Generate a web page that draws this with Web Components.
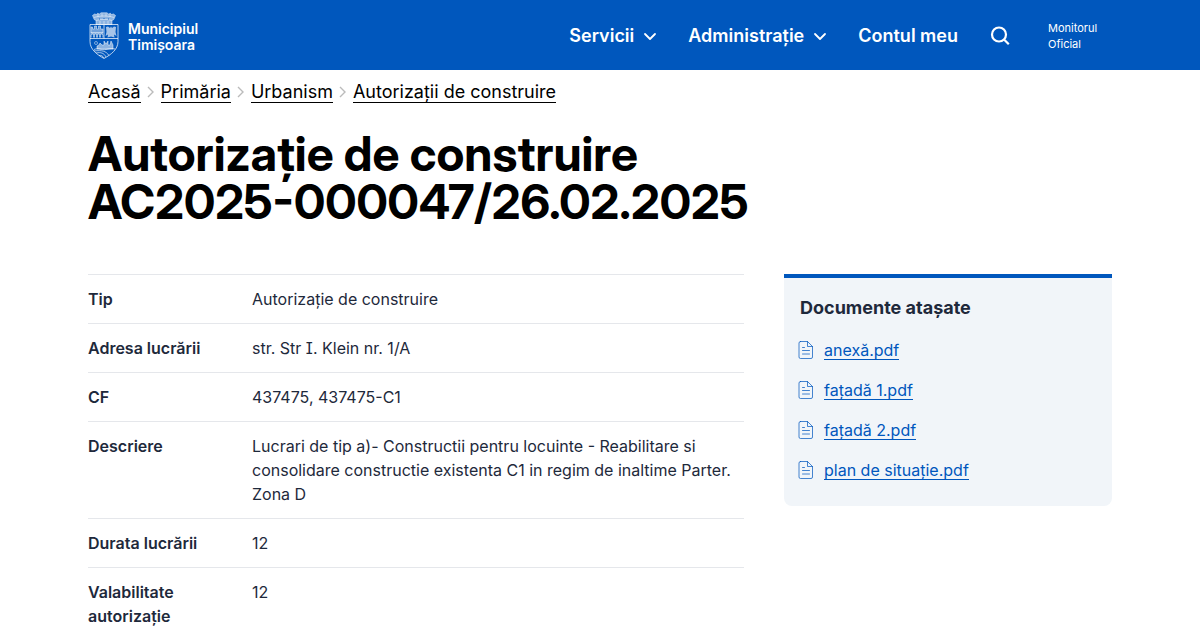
<!DOCTYPE html>
<html lang="ro">
<head>
  <meta charset="utf-8">
  <meta name="viewport" content="width=device-width, initial-scale=1">
  <title>Autorizație de construire AC2025-000047/26.02.2025</title>
  <style>
    :root {
      --blue: #0057bd;
      --ink: #1e293b;
      --line: #e5e7eb;
      --panel: #f1f5f9;
    }

    body {
      margin: 0;
      background: #fff;
      color: var(--ink);
      font: 16px/24px Inter, "Liberation Sans", sans-serif;
    }

    main {
      max-width: 1024px;
      margin: 0 auto;
      padding: 8px 24px 0;
    }

    h1 {
      margin: 24px 0 48px;
      color: #000;
      font-family: "Inter Display", Inter, "Liberation Sans", sans-serif;
      font-variation-settings: "opsz" 32;
      font-size: 48px;
      line-height: 48px;
      font-weight: 700;
    }

    .columns {
      display: grid;
      grid-template-columns: 2fr 1fr;
      align-items: start;
      gap: 40px;
    }

    @media (max-width: 800px) {
      .columns {
        grid-template-columns: 1fr;
      }
    }
  </style>
</head>
<body>
  <site-header>
    <nav-item menu>Servicii</nav-item>
    <nav-item menu>Administrație</nav-item>
    <nav-item>Contul meu</nav-item>
  </site-header>

  <main>
    <bread-crumbs></bread-crumbs>
    <h1>Autorizație de construire<br>AC2025-000047/26.02.2025</h1>
    <div class="columns">
      <permit-details></permit-details>
      <docs-panel heading="Documente atașate">
        <doc-link>anexă.pdf</doc-link>
        <doc-link>fațadă 1.pdf</doc-link>
        <doc-link>fațadă 2.pdf</doc-link>
        <doc-link>plan de situație.pdf</doc-link>
      </docs-panel>
    </div>
  </main>

  <script>
    // attaches an open shadow root filled from a template
    function render(host, html) {
      const template = document.createElement("template");
      template.innerHTML = html;
      host.attachShadow({ mode: "open" }).appendChild(template.content.cloneNode(true));
    }

    class CityCrest extends HTMLElement {
      constructor() {
        super();
        render(this, `
          <style>
            :host { display: block; }
            svg { display: block; }
          </style>
          <svg width="32" height="48" viewBox="0 0 32 48" fill="none" stroke="#fff" stroke-opacity=".8" stroke-width=".6" aria-hidden="true">
            <!-- mural crown -->
            <path d="M4.500 3.500l2-1.500 2 .5 1-1.200 2 .7 1.500-1.200h6l1.500 1.200 2-.7 1 1.200 2-.5 2 1.500-1.700 4-1.800 1v4h-16v-4l-1.800-1z" fill="#fff" fill-opacity=".55"/>
            <path d="M6 5.500c6-2 14-2 20 0M8 8.500c5-1.500 11-1.500 16 0M10 2v3M14 1.500v3M18 1.500v3M22 2v3M12 9v3M16 9v3M20 9v3"/>
            <path d="M11 7h1M15.500 6.500h1M20 7h1" stroke="#0057bd" stroke-width="1"/>
            <!-- shield -->
            <path d="M2 12.500h28v17c0 8-7 13-14 17-7-4-14-9-14-17z" stroke-width=".9"/>
            <path d="M2 26.500h28M16 13v13.500" stroke-width=".9"/>
            <!-- fort and bridge -->
            <path d="M3 17v-2h1.500v2h2v-3h2v3h2v-3h2v3H15v4H3z" fill="#fff" fill-opacity=".45"/>
            <path d="M3 21h12M3 25.500v-2a1.200 1.200 0 0 1 3 0v2M6 25.500v-2a1.200 1.200 0 0 1 3 0v2M9 25.500v-2a1.200 1.200 0 0 1 3 0v2M12 25.500v-2a1.200 1.200 0 0 1 3 0v2" stroke-width=".9"/>
            <!-- eagle -->
            <path d="M23 14.500l1 1.500 2-1.500 2 .5-.5 5 1 4-2.500-1.500.5 3-3.500-1-3.500 1 .5-3-2.500 1.500 1-4-.5-5 2-.5 2 1.500z" fill="#fff" fill-opacity=".65" stroke="none"/>
            <!-- sun, city and river -->
            <circle cx="8" cy="31" r="1.500"/>
            <path d="M9 37v-3l2-1 1-2 2 2h2v-4l2 3 2-3v4h2l1-4 2 4v4z" fill="#fff" fill-opacity=".55"/>
            <path d="M6 37.500c5-2 7 1 12 0s6-1 9-.5M6 39c8-1 12 0 15 4.500M8 41c5-1 8 0 10 4M11 43.500c2-.5 4 .5 5 2.500" stroke-width=".8"/>
          </svg>
        `);
      }
    }

    class NavItem extends HTMLElement {
      constructor() {
        super();
        // entries with a submenu are buttons, the rest are plain links
        const menu = this.hasAttribute("menu");
        render(this, `
          <style>
            :host { display: block; }
            a, button {
              display: flex;
              align-items: center;
              gap: 8px;
              padding: 0;
              border: 0;
              background: none;
              color: #fff;
              font: 600 18px/28px Inter, "Liberation Sans", sans-serif;
              text-decoration: none;
              white-space: nowrap;
              cursor: pointer;
            }
          </style>
          ${menu
            ? `<button type="button" aria-haspopup="true"><slot></slot>
                <svg width="16" height="16" viewBox="0 0 16 16" fill="none" stroke="#fff" stroke-width="1.800" stroke-linecap="round" stroke-linejoin="round" aria-hidden="true"><path d="M3 6l5 5 5-5"/></svg>
              </button>`
            : `<a href="#"><slot></slot></a>`}
        `);
      }
    }

    class SiteHeader extends HTMLElement {
      constructor() {
        super();
        render(this, `
          <style>
            :host { display: block; background: var(--blue); color: #fff; }
            .bar {
              display: flex;
              align-items: center;
              justify-content: space-between;
              gap: 24px;
              max-width: 1024px;
              min-height: 68px;
              margin: 0 auto;
              padding: 2px 24px 0;
            }
            a { color: #fff; text-decoration: none; }
            .brand {
              display: flex;
              align-items: center;
              gap: 8px;
              font-size: 14px;
              line-height: 16px;
              font-weight: 600;
            }
            .brand span { padding-top: 2px; }
            nav { display: flex; align-items: center; gap: 30px; }
            button { display: flex; padding: 0; border: 0; background: none; cursor: pointer; }
            .monitor {
              width: 64px;
              margin-left: 6px;
              font-size: 11px;
              line-height: 16px;
            }
          </style>
          <header class="bar">
            <a class="brand" href="#"><city-crest></city-crest><span>Municipiul<br>Timișoara</span></a>
            <nav>
              <slot></slot>
              <button type="button" aria-label="Căutare">
                <svg width="24" height="24" viewBox="0 0 24 24" fill="none" stroke="#fff" stroke-width="2.200" aria-hidden="true"><circle cx="11" cy="10.500" r="7"/><path d="M16 15.500l4.800 4.800"/></svg>
              </button>
              <a class="monitor" href="#">Monitorul Oficial</a>
            </nav>
          </header>
        `);
      }
    }

    class BreadCrumbs extends HTMLElement {
      constructor() {
        super();
        const items = ["Acasă", "Primăria", "Urbanism", "Autorizații de construire"];
        render(this, `
          <style>
            :host { display: block; font-size: 18px; line-height: 28px; }
            ol { display: flex; flex-wrap: wrap; margin: 0; padding: 0; list-style: none; }
            li { display: flex; align-items: center; min-height: 28px; }
            a {
              color: #000;
              line-height: 20px;
              text-decoration: none;
              border-bottom: 1px solid #000;
            }
            svg { margin: 0 6px; }
          </style>
          <nav aria-label="Fir de navigare">
            <ol>${items.map((item, i) => `<li>${i
              ? `<svg width="8" height="12" viewBox="0 0 8 12" fill="none" stroke="#bbb" stroke-width="1.400" aria-hidden="true"><path d="M1 1l5 5-5 5"/></svg>`
              : ""}<a href="#">${item}</a></li>`).join("")}</ol>
          </nav>
        `);
      }
    }

    class PermitDetails extends HTMLElement {
      constructor() {
        super();
        const rows = [
          ["Tip", "Autorizație de construire"],
          ["Adresa lucrării", "str. Str I. Klein nr. 1/A"],
          ["CF", "437475, 437475-C1"],
          ["Descriere", "Lucrari de tip a)- Constructii pentru locuinte - Reabilitare si consolidare constructie existenta C1 in regim de inaltime Parter. Zona D"],
          ["Durata lucrării", "12"],
          ["Valabilitate autorizație", "12"],
        ];
        render(this, `
          <style>
            :host { display: block; }
            table { width: 100%; border-collapse: collapse; table-layout: fixed; }
            th, td {
              padding: 12px 0;
              border-top: 1px solid var(--line);
              text-align: left;
              vertical-align: top;
            }
            th { width: 25%; box-sizing: border-box; padding-right: 16px; font-weight: 600; }
            td { font-feature-settings: "cv08"; }
          </style>
          <table>
            <tbody>${rows.map(([name, value]) =>
              `<tr><th scope="row">${name}</th><td>${value}</td></tr>`).join("")}</tbody>
          </table>
        `);
      }
    }

    class DocLink extends HTMLElement {
      constructor() {
        super();
        render(this, `
          <style>
            :host { display: flex; align-items: center; gap: 10px; }
            a {
              color: var(--blue);
              line-height: 18px;
              text-decoration: none;
              border-bottom: 1px solid var(--blue);
            }
          </style>
          <svg width="16" height="20" viewBox="0 0 16 20" fill="none" stroke="#0057bd" stroke-opacity=".8" stroke-width=".9" stroke-linecap="round" stroke-linejoin="round" aria-hidden="true">
            <path d="M2.500 1.500h7l5 5v10.500a1.500 1.500 0 0 1-1.500 1.500H2.500A1.500 1.500 0 0 1 1 17V3a1.500 1.500 0 0 1 1.500-1.500z"/>
            <path d="M9.500 1.500v5h5"/>
            <path d="M4.500 7.500h2M4.500 10.500h7M4.500 14h7"/>
          </svg>
          <a href="#"><slot></slot></a>
        `);
      }
    }

    class DocsPanel extends HTMLElement {
      constructor() {
        super();
        render(this, `
          <style>
            :host {
              display: block;
              padding: 16px 16px 24px 14px;
              border-top: 4px solid var(--blue);
              border-radius: 0 0 8px 8px;
              background: var(--panel);
            }
            h2 { margin: 0 0 16px 2px; font-size: 18px; line-height: 28px; font-weight: 700; }
            .list { display: grid; gap: 16px; }
            ::slotted(doc-link) { min-height: 24px; }
          </style>
          <h2>${this.getAttribute("heading")}</h2>
          <div class="list"><slot></slot></div>
        `);
      }
    }

    customElements.define("city-crest", CityCrest);
    customElements.define("nav-item", NavItem);
    customElements.define("site-header", SiteHeader);
    customElements.define("bread-crumbs", BreadCrumbs);
    customElements.define("permit-details", PermitDetails);
    customElements.define("doc-link", DocLink);
    customElements.define("docs-panel", DocsPanel);
  </script>
</body>
</html>
